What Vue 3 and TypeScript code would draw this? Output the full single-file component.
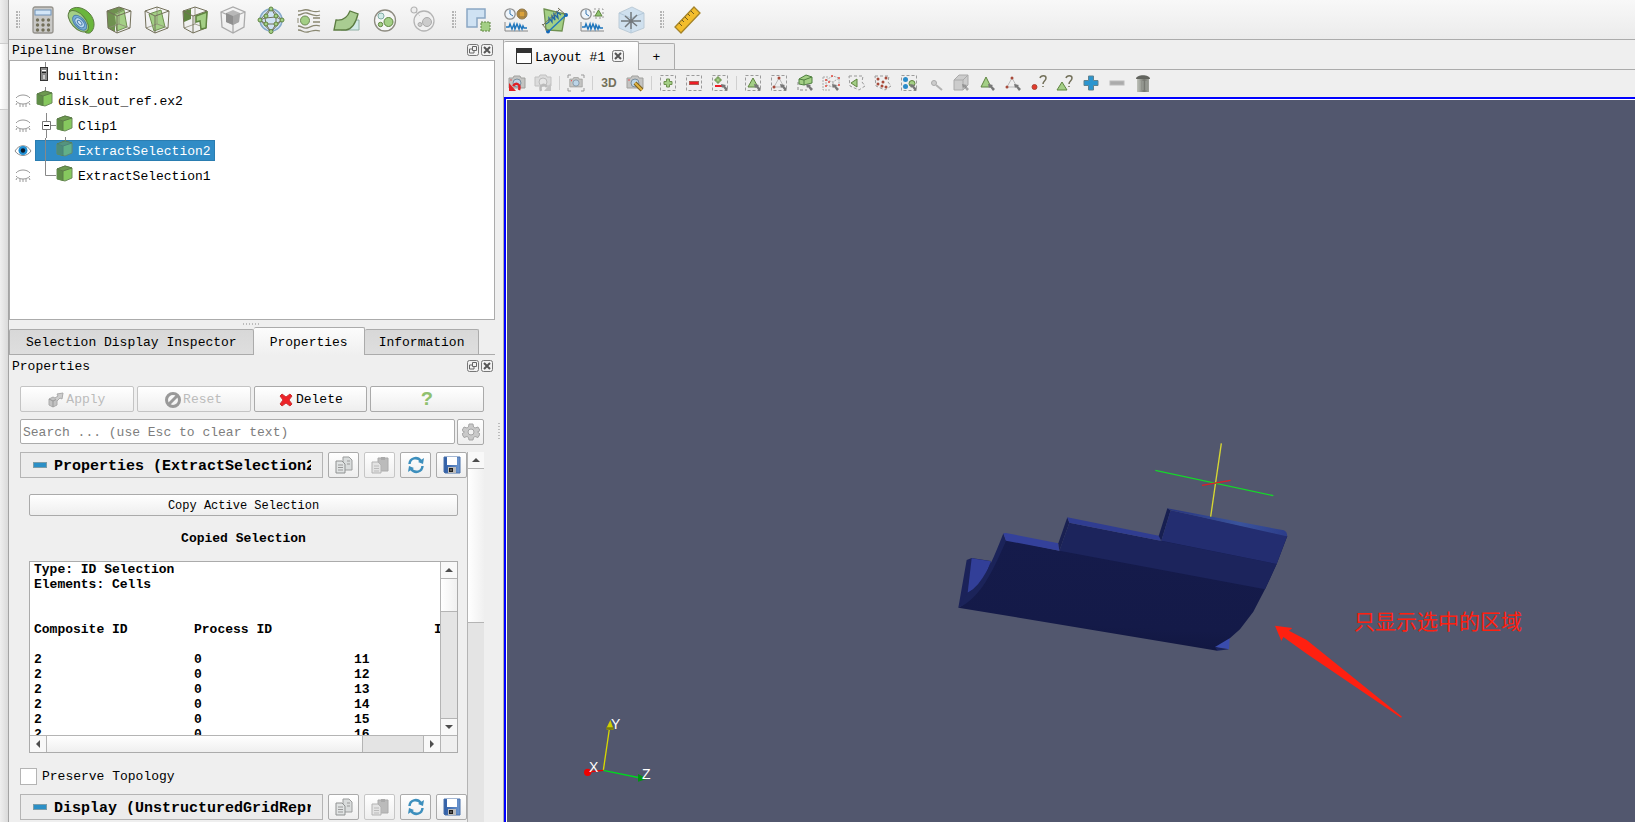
<script setup lang="ts">
import { ref } from 'vue'

interface Tool {
  icon: string
  label: string
}

const filterTools: Tool[] = [
  { icon: 'calculator', label: 'Calculator' },
  { icon: 'contour', label: 'Contour' },
  { icon: 'clip', label: 'Clip' },
  { icon: 'slice', label: 'Slice' },
  { icon: 'threshold', label: 'Threshold' },
  { icon: 'subset', label: 'Extract Subset' },
  { icon: 'glyph', label: 'Glyph' },
  { icon: 'stream', label: 'Stream Tracer' },
  { icon: 'warp', label: 'Warp By Vector' },
  { icon: 'group', label: 'Group Datasets' },
  { icon: 'level', label: 'Extract Level' },
]

const analysisTools: Tool[] = [
  { icon: 'extract', label: 'Extract Selection' },
  { icon: 'global-time', label: 'Plot Global Variables Over Time' },
  { icon: 'plot-line', label: 'Plot Over Line' },
  { icon: 'selection-time', label: 'Plot Selection Over Time' },
  { icon: 'probe', label: 'Probe Location' },
]

const toolGroups: Tool[][] = [filterTools, analysisTools, [{ icon: 'ruler', label: 'Ruler' }]]

const viewGroups: Tool[][] = [
  [
    { icon: 'cam-undo', label: 'Undo Camera' },
    { icon: 'cam-redo', label: 'Redo Camera' },
  ],
  [{ icon: 'cam-shot', label: 'Capture Screenshot' }],
  [
    { icon: '', label: '3D' },
    { icon: 'cam-zoom', label: 'Adjust Camera' },
  ],
  [
    { icon: 'sel-add', label: 'Add Selection' },
    { icon: 'sel-sub', label: 'Subtract Selection' },
    { icon: 'sel-toggle', label: 'Toggle Selection' },
  ],
  [
    { icon: 'pick-cells', label: 'Select Cells On' },
    { icon: 'pick-points', label: 'Select Points On' },
    { icon: 'frustum-cells', label: 'Select Cells Through' },
    { icon: 'frustum-points', label: 'Select Points Through' },
    { icon: 'poly-cells', label: 'Select Cells With Polygon' },
    { icon: 'poly-points', label: 'Select Points With Polygon' },
    { icon: 'pick-blocks', label: 'Select Block' },
    { icon: 'int-point', label: 'Interactive Select Point Data' },
    { icon: 'int-block', label: 'Interactive Select Block' },
    { icon: 'int-cells', label: 'Interactive Select Cells On' },
    { icon: 'int-points', label: 'Interactive Select Points On' },
    { icon: 'hover-points', label: 'Hover Points On' },
    { icon: 'hover-cells', label: 'Hover Cells On' },
    { icon: 'grow', label: 'Grow Selection' },
    { icon: 'shrink', label: 'Shrink Selection' },
    { icon: 'trash', label: 'Clear Selection' },
  ],
]

interface PipelineNode {
  name: string
  icon: 'server' | 'dataset'
  eye: '' | 'eye-closed' | 'eye-open'
  branch: '' | 'branch-box' | 'branch-pass' | 'branch-end'
  tick: boolean
}

const nodes: PipelineNode[] = [
  { name: 'builtin:', icon: 'server', eye: '', branch: '', tick: true },
  { name: 'disk_out_ref.ex2', icon: 'dataset', eye: 'eye-closed', branch: '', tick: true },
  { name: 'Clip1', icon: 'dataset', eye: 'eye-closed', branch: 'branch-box', tick: false },
  { name: 'ExtractSelection2', icon: 'dataset', eye: 'eye-open', branch: 'branch-pass', tick: true },
  { name: 'ExtractSelection1', icon: 'dataset', eye: 'eye-closed', branch: 'branch-end', tick: false },
]

const selected = ref('ExtractSelection2')
const dockTabs = ['Selection Display Inspector', 'Properties', 'Information']
const activeTab = ref('Properties')
const search = ref('')
const preserve = ref(false)
const cellIds = [11, 12, 13, 14, 15, 16]
const sectionTools: Tool[] = [
  { icon: 'copy', label: 'Copy' },
  { icon: 'paste', label: 'Paste' },
  { icon: 'reload', label: 'Restore defaults' },
  { icon: 'save', label: 'Save as defaults' },
]
</script>

<template>
  <svg class="sprite" aria-hidden="true">
    <defs>
      <linearGradient id="g-save" x1="0" x2="1"><stop offset="0" stop-color="#2d5ba4" /><stop offset="1" stop-color="#6d97d0" /></linearGradient>
      <linearGradient id="g-trash" x1="0" x2="1"><stop offset="0" stop-color="#c0c3bb" /><stop offset=".6" stop-color="#74766f" /><stop offset="1" stop-color="#a0a39b" /></linearGradient>
    </defs>

    <symbol id="wire" viewBox="0 0 28 28">
      <path d="M14 1v17M3 22l11-4 11 4" fill="none" stroke="#8d8a76" stroke-width=".8" />
      <path d="M2 5 14 1l12 4-1 17-13 5-9-5ZM2 5l10 5 14-5M12 10v17" fill="none" stroke="#73705a" />
    </symbol>
    <symbol id="calculator" viewBox="0 0 28 28">
      <rect x="4" y="1" width="20" height="26" rx="2" fill="#c8c8c6" stroke="#95938d" stroke-width="1.3" />
      <rect x="6" y="4" width="16" height="5" fill="#d3e6f7" stroke="#6f92b8" />
      <g fill="#73705a"><circle cx="8.500" cy="14" r="1.700" /><circle cx="14" cy="14" r="1.700" /><circle cx="19.500" cy="14" r="1.700" /><circle cx="8.500" cy="19" r="1.700" /><circle cx="14" cy="19" r="1.700" /><circle cx="19.500" cy="19" r="1.700" /><circle cx="8.500" cy="24" r="1.700" /><circle cx="14" cy="24" r="1.700" /><circle cx="19.500" cy="24" r="1.700" /></g>
    </symbol>
    <symbol id="contour" viewBox="0 0 28 28">
      <path d="M2 5C7-1 17 1 23 8c5 6 5 13 2 17-2 3-4 2-6 2Z" fill="#6ab63c" stroke="#5c7c42" />
      <g transform="rotate(48 12 16)" stroke="#5c7c42"><ellipse cx="11" cy="16" rx="13" ry="7" fill="#a3cf85" /><ellipse cx="13" cy="16" rx="9" ry="5" fill="#79aed6" stroke="#4b7fae" /><ellipse cx="13" cy="16" rx="6" ry="3.500" fill="#b9d8ef" stroke="#4b7fae" /><ellipse cx="13" cy="16" rx="3" ry="1.500" fill="#d8e9f7" stroke="#4b7fae" /></g>
    </symbol>
    <symbol id="clip" viewBox="0 0 28 28">
      <path d="M2 5 14 1l6 2-10 5v18l-7-4Z" fill="#6f9150" /><path d="m9 9 10-5 3 17-10 4Z" fill="#a3cf85" stroke="#6f9150" />
      <use href="#wire" />
    </symbol>
    <symbol id="slice" viewBox="0 0 28 28">
      <path d="m6 8 12-4 4 17-11 4Z" fill="#a3cf85" stroke="#6f9150" /><use href="#wire" />
    </symbol>
    <symbol id="threshold" viewBox="0 0 28 28">
      <path d="m2 5 8-2v10l-7 3Z" fill="#5f8440" /><use href="#wire" /><path d="m15 10 11-4-1 16-5 1-1-8-4 1Z" fill="#a3cf85" stroke="#5f8440" stroke-width="1.500" />
    </symbol>
    <symbol id="subset" viewBox="0 0 28 28">
      <path d="M2 6 14 1l12 5-1 15-11 6-11-6ZM2 6l12 5 12-5M14 11v16" fill="none" stroke="#aaa" stroke-width="1.300" />
      <path d="m7 7 7-3 7 3-1 9-6 3-7-3Z" fill="#b8b8b8" /><path d="m7 7 7 3v9l-7-3Z" fill="#8f8f8f" /><path d="m14 10 7-3-1 9-6 3Z" fill="#a5a5a5" />
    </symbol>
    <symbol id="glyph" viewBox="0 0 28 28">
      <circle cx="14" cy="14" r="11" fill="#cfe2f3" stroke="#86a9ca" stroke-width="1.500" />
      <path d="M14 2 3 14l11 12 11-12ZM14 2 8 12l-5 2 6 4 5 8 5-8 6-4-6-3ZM8 12l11-1v7H9Z" fill="none" stroke="#73705a" />
      <g fill="#a3cf85" stroke="#5f8440"><circle cx="14" cy="3" r="2" /><circle cx="3" cy="14" r="2" /><circle cx="25" cy="14" r="2" /><circle cx="14" cy="25.500" r="2" /><circle cx="9" cy="10" r="2" /><circle cx="19" cy="10" r="2" /><circle cx="9" cy="18" r="2" /><circle cx="19" cy="18" r="2" /></g>
    </symbol>
    <symbol id="stream" viewBox="0 0 28 28">
      <path d="M3 5c5 0 5-2 10-1s6 3 12 1M3 9c4 0 5-3 9-2s7 4 13 2M18 12h7M18 16h7M3 20c4 0 5 3 9 2s7-4 13-2M3 24c5 0 5 3 10 2s6-3 12-1" fill="none" stroke="#8a8872" stroke-width="1.300" />
      <circle cx="10" cy="14.500" r="4.500" fill="#a3cf85" stroke="#6f8a55" /><path d="M3 12v5" stroke="#8a8872" />
    </symbol>
    <symbol id="warp" viewBox="0 0 28 28">
      <path d="M14 14h12v10H8Z" fill="#d3ebe8" stroke="#8fb0a4" /><path d="M1 24 3 14c8 1 12-4 14-9l8 3c-2 8-5 15-12 16Z" fill="#a9cc91" stroke="#5c7c42" stroke-width="1.300" />
    </symbol>
    <symbol id="group" viewBox="0 0 28 28">
      <circle cx="14" cy="14.500" r="10.500" fill="#f6f6f6" stroke="#8d8b80" stroke-width="1.300" /><circle cx="10" cy="10" r="3" fill="#d3ebe8" stroke="#82aca5" /><circle cx="17.500" cy="16" r="4.500" fill="#a3cf85" stroke="#5f8440" /><circle cx="9.500" cy="18.500" r="2.200" fill="#a3cf85" stroke="#5f8440" />
    </symbol>
    <symbol id="level" viewBox="0 0 28 28">
      <circle cx="15" cy="15" r="10" fill="#f1f1f1" stroke="#b4b4b4" stroke-width="1.300" /><circle cx="5" cy="4" r="3" fill="#eee" stroke="#b4b4b4" stroke-width="1.200" /><path d="m7 6 4 4" stroke="#b4b4b4" stroke-dasharray="1 1" /><circle cx="18" cy="16" r="4.500" fill="#ccc" stroke="#aaa" /><circle cx="11" cy="18.500" r="2" fill="#ccc" stroke="#aaa" />
    </symbol>
    <symbol id="extract" viewBox="0 0 28 28">
      <path d="M2 3h18v9h-8v9H2Z" fill="#cfe2f3" stroke="#8aa7c4" stroke-width="1.500" /><rect x="16" y="16" width="9" height="9" fill="#a3cf85" stroke="#5f8440" stroke-dasharray="2 1" />
    </symbol>
    <symbol id="clock" viewBox="0 0 28 28">
      <circle cx="7" cy="8" r="5.200" fill="#eef5fb" stroke="#8f8f8f" stroke-width="1.300" /><path d="M7 4v4l3 2" fill="none" stroke="#3674ad" /><path d="M2 16v9h23" fill="none" stroke="#888" /><path d="M3 21h3l1-3 2 5 2-5 1 5 2-5 2 5 1-4 2 4 1-3 1 2h3" fill="none" stroke="#2077bd" stroke-width="1.500" />
    </symbol>
    <symbol id="global-time" viewBox="0 0 28 28">
      <use href="#clock" /><circle cx="19" cy="8" r="5" fill="#d49a32" stroke="#85714a" /><rect x="16" y="5" width="6" height="6" fill="#dba23a" stroke="#85714a" />
    </symbol>
    <symbol id="selection-time" viewBox="0 0 28 28">
      <use href="#clock" /><rect x="15" y="3" width="9" height="9" fill="none" stroke="#999" stroke-dasharray="2 2" /><path d="m19.500 4 3.500 6h-7Z" fill="#8fc56e" stroke="#5f8440" />
    </symbol>
    <symbol id="plot-line" viewBox="0 0 28 28">
      <path d="m3 3 21 5-3 17-16-1Z" fill="#a3cf85" stroke="#6f9150" stroke-width="1.300" /><path d="M7 26 25 9" stroke="#2077bd" stroke-width="1.500" /><path d="m5 18 3-2v-4l3 4v-6l3 4-1-6 4 4-1-6 4 3" fill="none" stroke="#2368a6" stroke-width="1.300" /><circle cx="7" cy="25.500" r="2" fill="#1368b8" /><circle cx="25" cy="9" r="2" fill="#1368b8" /><path d="m17 2 8 7M1 18l6 7M2 19 19 3" fill="none" stroke="#73705a" />
    </symbol>
    <symbol id="probe" viewBox="0 0 28 28">
      <path d="M2 7 15 1l12 6v15l-13 5-12-5Z" fill="#cfe0ee" stroke="#bccbd7" /><path d="m2 7 12 5 13-5M14 12v15" fill="none" stroke="#b3c8d9" /><path d="M4 15h20M14 6v17M8 10l12 10M20 9 8 21" stroke="#73787c" stroke-width="1.500" />
    </symbol>
    <symbol id="ruler" viewBox="0 0 28 28">
      <path d="M21 1 27 7 8 27 2 21Z" fill="#f3bd2b" stroke="#a48328" stroke-width="1.300" /><path d="m6 17 3 3m0-6 2 2m1-5 3 3m0-6 2 2m1-5 3 3" stroke="#705c20" />
    </symbol>

    <symbol id="camera" viewBox="0 0 18 18">
      <path d="M1 4h4l1-2h6l1 2h4v10H1Z" fill="#c4c4c2" stroke="#a0a09d" /><circle cx="9" cy="9" r="4" fill="#bcd5e8" stroke="#7b8e9d" /><path d="M2.500 6h1" stroke="#e33" stroke-width="1.500" />
    </symbol>
    <symbol id="pointer" viewBox="0 0 18 18">
      <path d="m10 10 1 4 1-1 3 4 2-2-3-3 1-1Z" fill="#777" />
    </symbol>
    <symbol id="dash" viewBox="0 0 18 18"><rect x="1.500" y="1.500" width="15" height="15" fill="none" stroke="#9b9b9b" stroke-dasharray="3 2" /></symbol>
    <symbol id="cam-undo" viewBox="0 0 18 18"><use href="#camera" /><path d="M5 12c3-4 8-2 6 4" fill="none" stroke="#df2226" stroke-width="2.500" /><path d="M1 9v8h7Z" fill="#df2226" /></symbol>
    <symbol id="cam-redo" viewBox="0 0 18 18"><path d="M1 3h4l1-2h6l1 2h4v9H1Z" fill="#dbdbdb" stroke="#c1c1c1" /><circle cx="9" cy="8" r="4" fill="#e6e6e6" stroke="#bbb" /><path d="M13 13c-3-4-8-2-6 4" fill="none" stroke="#bbb" stroke-width="2.500" /><path d="M17 9v8h-7Z" fill="#c4c4c4" /></symbol>
    <symbol id="cam-shot" viewBox="0 0 18 18"><use href="#camera" x="2" y="2" width="14" height="14" /><path d="M1 4V1h3M14 1h3v3M17 14v3h-3M4 17H1v-3" fill="none" stroke="#999" /></symbol>
    <symbol id="cam-zoom" viewBox="0 0 18 18"><use href="#camera" /><path d="m9 9 7 7" stroke="#7d5e1c" stroke-width="4" /><path d="m9 9 7 7" stroke="#e1b643" stroke-width="2" /></symbol>
    <symbol id="plus-s" viewBox="0 0 18 18"><path d="M7.500 5h3v2.500H13v3h-2.500V13h-3v-2.500H5v-3h2.500Z" fill="#a3cf85" stroke="#6f9150" /></symbol>
    <symbol id="sel-add" viewBox="0 0 18 18"><use href="#dash" /><use href="#plus-s" /></symbol>
    <symbol id="sel-sub" viewBox="0 0 18 18"><use href="#dash" /><rect x="4.500" y="7.500" width="9" height="3" fill="#ee1c25" stroke="#ad5a50" /></symbol>
    <symbol id="sel-toggle" viewBox="0 0 18 18"><use href="#dash" /><path d="M6 3h2v2h2v2H8v2H6V7H4V5h2Z" fill="#a3cf85" stroke="#6f9150" /><path d="M4 12h7" stroke="#ee1c25" stroke-width="2" /><use href="#pointer" /></symbol>
    <symbol id="pick-cells" viewBox="0 0 18 18"><use href="#dash" /><path d="m9 4 5 9H4Z" fill="#a3cf85" stroke="#5f8440" /><use href="#pointer" /></symbol>
    <symbol id="pick-points" viewBox="0 0 18 18"><use href="#dash" /><path d="m9 4 5 9H4Z" fill="none" stroke="#bbb" /><g fill="#a84a3a"><circle cx="9" cy="4" r="1.500" /><circle cx="4" cy="13" r="1.500" /></g><use href="#pointer" /></symbol>
    <symbol id="frustum-cells" viewBox="0 0 18 18"><path d="M2 8v8h9" fill="none" stroke="#8b8b8b" stroke-dasharray="3 2" /><path d="m3 5 7-4 6 2v6l-8 2-5-1Z" fill="#a3cf85" stroke="#4f8040" /><path d="m3 5 5 1 8-3M8 6v5" fill="none" stroke="#4f8040" /><use href="#pointer" /></symbol>
    <symbol id="frustum-points" viewBox="0 0 18 18"><path d="M1 3h6M1 3v13h8M4 6l7-4 6 2v7l-6 2-7-2Zm0 0 7 2 6-4m-6 4v5" fill="none" stroke="#aaa" stroke-dasharray="2 1" /><g fill="#e34a3e"><circle cx="4" cy="6" r="1" /><circle cx="10" cy="2" r="1" /><circle cx="17" cy="4" r="1" /><circle cx="4" cy="12" r="1" /><circle cx="7" cy="8" r="1" /><circle cx="17" cy="11" r="1" /></g><use href="#pointer" /></symbol>
    <symbol id="poly-cells" viewBox="0 0 18 18"><path d="M1 2h14l-1 6 3 4-6 4-9-4Z" fill="none" stroke="#999" stroke-dasharray="3 2" /><path d="m3 9 6-4v8Z" fill="#a3cf85" stroke="#5f8440" /></symbol>
    <symbol id="poly-points" viewBox="0 0 18 18"><path d="M1 2h14l-1 6 3 4-6 4-9-4Z" fill="none" stroke="#999" stroke-dasharray="3 2" /><g fill="#a84a3a"><circle cx="4" cy="5" r="1.500" /><circle cx="9" cy="8" r="1.500" /><circle cx="12" cy="4" r="1.500" /><circle cx="4" cy="10" r="1.500" /><circle cx="8" cy="12" r="1.500" /><circle cx="12" cy="13" r="1.500" /></g></symbol>
    <symbol id="pick-blocks" viewBox="0 0 18 18"><use href="#dash" /><circle cx="5.500" cy="5.500" r="2.500" fill="#2b8cc9" /><circle cx="5.500" cy="12.500" r="2.500" fill="#2b8cc9" /><circle cx="12" cy="9.500" r="3" fill="#a3cf85" stroke="#5f8440" /><use href="#pointer" /></symbol>
    <symbol id="int-point" viewBox="0 0 18 18"><circle cx="8" cy="9" r="2.500" fill="#ccc" stroke="#aaa" /><path d="m10 11 6 5" stroke="#b3b3b3" stroke-width="2" /></symbol>
    <symbol id="int-block" viewBox="0 0 18 18"><path d="m2 6 5-5h9v10l-5 5H2Z" fill="#ccc" stroke="#aaa" /><path d="M2 6h9v10M11 6l5-5" fill="none" stroke="#aaa" /><use href="#pointer" opacity=".6" /></symbol>
    <symbol id="int-cells" viewBox="0 0 18 18"><path d="m8 3 5 10H3Z" fill="#a3cf85" stroke="#5f8440" /><use href="#pointer" /></symbol>
    <symbol id="int-points" viewBox="0 0 18 18"><path d="m8 4 5 9H3Z" fill="none" stroke="#bbb" /><g fill="#a84a3a"><circle cx="8" cy="4" r="1.500" /><circle cx="3" cy="13" r="1.500" /></g><use href="#pointer" /></symbol>
    <symbol id="hook" viewBox="0 0 18 18"><path d="M10 4c1-3 6-3 6 0 0 3-3 3-3 6m0 2v1" fill="none" stroke="#73705a" stroke-width="1.500" /></symbol>
    <symbol id="hover-points" viewBox="0 0 18 18"><circle cx="4.500" cy="13" r="2.500" fill="#e5392c" stroke="#a84a3a" /><use href="#hook" /></symbol>
    <symbol id="hover-cells" viewBox="0 0 18 18"><path d="m6 8 5 8H1Z" fill="#a3cf85" stroke="#5f8440" /><use href="#hook" /></symbol>
    <symbol id="grow" viewBox="0 0 18 18"><path d="M6.500 2h5v4.500H16v5h-4.500V16h-5v-4.500H2v-5h4.500Z" fill="#2b95cf" stroke="#5e8290" /></symbol>
    <symbol id="shrink" viewBox="0 0 18 18"><rect x="2" y="7" width="14" height="4" fill="#ababab" stroke="#bbb" /></symbol>
    <symbol id="trash" viewBox="0 0 18 18"><path d="M3 5h12v13H3Z" fill="url(#g-trash)" /><path d="M2 5c0-5 14-5 14 0Z" fill="#62645e" /><path d="M6 7v9m3-9v9m3-9v9" stroke="#aeb1a9" stroke-width=".7" /></symbol>

    <symbol id="server" viewBox="0 0 20 25"><rect x="4.500" y="4.500" width="7" height="13" fill="#8a8a8a" stroke="#333" /><path d="M6 7.500h4" stroke="#fff" /><path d="M6 9.500h4" stroke="#222" /><path d="M8 12v4" stroke="#ccc" stroke-width="2" /></symbol>
    <symbol id="dataset" viewBox="0 0 20 25">
      <path d="m1 6 8-3 7 2v10l-7 3-8-2Z" fill="#86c85e" stroke="#6d8a5c" /><path d="m1 6 6 2v10l-6-2Z" fill="#5f8d47" /><path d="m1 6 8-3 7 2-9 3Z" fill="#6d9a50" stroke="#5d7d49" /><path d="M7 8v10" stroke="#5d7d49" />
    </symbol>
    <symbol id="branch-box" viewBox="0 0 20 25"><path d="M10.500-2v11M10.500 17v8M15 12.500h5" stroke="#888" /><path d="M6.500 8.500h8v8h-8Z" fill="#fff" stroke="#777" /><path d="M8 12.500h5" stroke="#000" /></symbol>
    <symbol id="branch-pass" viewBox="0 0 20 25"><path d="M9.500 0v25" stroke="#888" /></symbol>
    <symbol id="branch-end" viewBox="0 0 20 25"><path d="M9.500 0v12.500H20" fill="none" stroke="#888" /></symbol>
    <symbol id="eye-closed" viewBox="0 0 18 16"><path d="M2 5c3-4 11-4 14 0M2 8c3 4 11 4 14 0M3 10l-1 2M6 11v3M9 11v3M12 11v3M15 10l1 2" fill="none" stroke="#999" /></symbol>
    <symbol id="eye-open" viewBox="0 0 18 16"><path d="M1 8c4-7 12-7 16 0-4 6-12 6-16 0Z" fill="#fff" stroke="#8b8b8b" /><circle cx="9" cy="7.500" r="4.500" fill="#1f8fd4" /><circle cx="9" cy="7.500" r="2.200" fill="#0a1a2a" /></symbol>
    <symbol id="float" viewBox="0 0 12 12"><rect x=".5" y=".5" width="11" height="11" rx="2" fill="#f2f2f2" stroke="#777" /><path d="M5.500 2.500h4v4h-4ZM5 5H2.500v4H7V7" fill="none" stroke="#666" /></symbol>
    <symbol id="close" viewBox="0 0 12 12"><rect x=".5" y=".5" width="11" height="11" rx="2" fill="#f2f2f2" stroke="#777" /><path d="m3 3 6 6m0-6L3 9" stroke="#555" stroke-width="2" /></symbol>

    <symbol id="apply" viewBox="0 0 16 16"><path d="m1 7 4-2 4 2v6l-4 2-4-2Z" fill="#c2c2c2" stroke="#aaa" /><path d="m1 7 4 2 4-2M5 9v6" fill="none" stroke="#999" /><path d="m7 6 3-2-1-2 6-1-1 6-2-1-3 3" fill="#ccc" stroke="#aaa" /></symbol>
    <symbol id="reset" viewBox="0 0 16 16"><circle cx="8" cy="8" r="6.500" fill="none" stroke="#999" stroke-width="3" /><path d="m12 4-8 8" stroke="#999" stroke-width="3" /></symbol>
    <symbol id="delete" viewBox="0 0 16 16"><path d="m4 2 4 3 4-3 2 2-3 4 3 4-2 2-4-3-4 3-2-2 3-4-3-4Z" fill="#ee2228" stroke="#c33" /></symbol>
    <symbol id="gear" viewBox="0 0 18 18"><path d="M7 1h4l.5 3 1.500 1 3-1 2 3.500L15.500 9l2.500 2-2 3.500-3-1-1.500 1L11 17H7l-.5-2.500-1.500-1-3 1L0 11l2.500-2L0 7.500 2 4l3 1 1.500-1Z" fill="#c9c9c9" stroke="#a5a5a5" /><circle cx="9" cy="9" r="3" fill="#f2f2f2" stroke="#a5a5a5" /></symbol>
    <symbol id="copy" viewBox="0 0 18 18"><path d="M8 1h6l3 3v10H8Z" fill="#d9dcdc" stroke="#9b9d9d" /><path d="M1 5h6l3 3v9H1Z" fill="#e0e3e3" stroke="#8f9191" /><path d="M3 9h5M3 11.500h5M3 14h5M12 5h3M12 8h3" stroke="#999" /></symbol>
    <symbol id="paste" viewBox="0 0 18 18"><path d="M7 2h10v13H7Z" fill="#bbb" stroke="#aaa" /><path d="M10 1h4v3h-4Z" fill="#aaa" /><path d="M1 6h6l3 3v8H1Z" fill="#e3e3e3" stroke="#b3b3b3" /><path d="M3 10h5M3 12.500h5M3 15h5" stroke="#bbb" /></symbol>
    <symbol id="reload" viewBox="0 0 18 18"><path d="M2.500 8C3 2 10 0 14 5M15.500 10C15 16 8 18 4 13" fill="none" stroke="#3d8fbd" stroke-width="2.500" /><path d="m17 2-1 6-5-2ZM1 16l1-6 5 2Z" fill="#3d8fbd" /></symbol>
    <symbol id="save" viewBox="0 0 18 18"><path d="M1 1h16v16H2l-1-1Z" fill="url(#g-save)" stroke="#4870aa" /><path d="M4 1h10v8H4Z" fill="#fff" /><path d="M5 11h8v6H5Z" fill="#bbb" /><path d="M6 12h4v4H6Z" fill="#1d1d1d" /><path d="M7.500 14h1" stroke="#fff" /></symbol>
    <symbol id="arrow" viewBox="0 0 16 16"><path d="m4 10 4-4 4 4Z" fill="#4d4d4d" /></symbol>
  </svg>

  <div class="app">
    <div class="edge"><div class="edge-top"></div><div class="edge-mid"></div></div>
    <div class="main">
      <header class="toolbar" role="toolbar">
        <div v-for="(group, g) in toolGroups" :key="g" class="group">
          <span class="grip"></span>
          <button v-for="t in group" :key="t.icon" class="tool" :aria-label="t.label">
            <svg width="28" height="28"><use :href="'#' + t.icon" /></svg>
          </button>
        </div>
      </header>

      <div class="body">
        <aside class="dock">
          <div class="dock-title">
            <span>Pipeline Browser</span>
            <button class="mini" aria-label="Float"><svg width="12" height="12"><use href="#float" /></svg></button>
            <button class="mini" aria-label="Close"><svg width="12" height="12"><use href="#close" /></svg></button>
          </div>
          <ul class="tree">
            <li v-for="n in nodes" :key="n.name" class="node">
              <button class="eye" :aria-label="'Visibility of ' + n.name">
                <svg v-if="n.eye" width="18" height="16"><use :href="'#' + n.eye" /></svg>
              </button>
              <button class="label" :class="{ selected: n.name === selected }" @click="selected = n.name">
                <svg v-if="n.branch" class="cell" width="20" height="25"><use :href="'#' + n.branch" /></svg>
                <svg class="cell" width="20" height="25">
                  <path v-if="n.tick" d="M9.500 -1v5" stroke="#888" />
                  <use :href="'#' + n.icon" />
                  <path v-if="n.name === selected" d="m1 6 8-3 7 2v10l-7 3-8-2Z" fill="#308cc6" opacity=".4" />
                </svg>
                <span>{{ n.name }}</span>
              </button>
            </li>
          </ul>
          <div class="splitter-h"><span></span></div>
          <nav class="tabs">
            <button v-for="t in dockTabs" :key="t" class="tab" :class="{ active: t === activeTab }" @click="activeTab = t">{{ t }}</button>
          </nav>
          <div class="dock-title props-title">
            <span>Properties</span>
            <button class="mini" aria-label="Float"><svg width="12" height="12"><use href="#float" /></svg></button>
            <button class="mini" aria-label="Close"><svg width="12" height="12"><use href="#close" /></svg></button>
          </div>
          <div class="props">
            <div class="actions">
              <button class="btn" disabled><svg width="16" height="16"><use href="#apply" /></svg>Apply</button>
              <button class="btn" disabled><svg width="16" height="16"><use href="#reset" /></svg>Reset</button>
              <button class="btn"><svg width="16" height="16"><use href="#delete" /></svg>Delete</button>
              <button class="btn help">?</button>
            </div>
            <div class="search">
              <input v-model="search" type="text" aria-label="Search properties" placeholder="Search ... (use Esc to clear text)" />
              <button class="btn gear" aria-label="Advanced properties"><svg width="18" height="18"><use href="#gear" /></svg></button>
            </div>
            <div class="scroll">
              <div class="content">
                <div class="section">
                  <button class="fold"><i></i><span>Properties (ExtractSelection2)</span></button>
                  <button v-for="t in sectionTools" :key="t.icon" class="btn sq" :class="{ dim: t.icon === 'paste' }" :aria-label="t.label"><svg width="18" height="18"><use :href="'#' + t.icon" /></svg></button>
                </div>
                <div class="selection">
                  <button class="btn copy">Copy Active Selection</button>
                  <h3>Copied Selection</h3>
                  <div class="textbox">
                    <div class="view">
                      <p>Type: ID Selection</p>
                      <p>Elements: Cells</p>
                      <table>
                        <thead>
                          <tr><th>Composite ID</th><th>Process ID</th><th class="index">Index</th></tr>
                        </thead>
                        <tbody>
                          <tr v-for="id in cellIds" :key="id"><td>2</td><td>0</td><td>{{ id }}</td></tr>
                        </tbody>
                      </table>
                    </div>
                    <div class="vbar">
                      <button aria-label="Scroll up"><svg width="16" height="16"><use href="#arrow" /></svg></button>
                      <div class="thumb"></div>
                      <button class="down" aria-label="Scroll down"><svg width="16" height="16"><use href="#arrow" /></svg></button>
                    </div>
                    <div class="hbar">
                      <button class="left" aria-label="Scroll left"><svg width="16" height="16"><use href="#arrow" /></svg></button>
                      <div class="thumb"></div>
                      <div class="track"></div>
                      <button class="right" aria-label="Scroll right"><svg width="16" height="16"><use href="#arrow" /></svg></button>
                    </div>
                    <div class="corner"></div>
                  </div>
                </div>
                <label class="check"><input v-model="preserve" type="checkbox" />Preserve Topology</label>
                <div class="section">
                  <button class="fold"><i></i><span>Display (UnstructuredGridRepresentation)</span></button>
                  <button v-for="t in sectionTools" :key="t.icon" class="btn sq" :class="{ dim: t.icon === 'paste' }" :aria-label="t.label"><svg width="18" height="18"><use :href="'#' + t.icon" /></svg></button>
                </div>
              </div>
              <div class="vbar outer">
                <button aria-label="Scroll up"><svg width="16" height="16"><use href="#arrow" /></svg></button>
                <div class="thumb"></div>
              </div>
            </div>
          </div>
        </aside>

        <div class="splitter-v"><span></span></div>

        <main class="workspace">
          <nav class="layout-tabs">
            <div class="layout-tab">
              <svg width="16" height="16" viewBox="0 0 16 16"><path d="M.5.5h15v15H.5Z" fill="#fff" stroke="#333" /><path d="M0 0h16v5H0Z" fill="#333" /></svg>
              <button class="layout-name">Layout #1</button>
              <button class="mini" aria-label="Close layout"><svg width="12" height="12"><use href="#close" /></svg></button>
            </div>
            <button class="add-tab" aria-label="New layout">+</button>
          </nav>
          <div class="view-tools" role="toolbar">
            <template v-for="(group, g) in viewGroups" :key="g">
              <i v-if="g > 0" class="sep"></i>
              <button v-for="t in group" :key="t.label" class="vtool" :aria-label="t.label">
                <svg v-if="t.icon" width="18" height="18"><use :href="'#' + t.icon" /></svg>
                <b v-else>{{ t.label }}</b>
              </button>
            </template>
          </div>
          <div class="viewport">
            <svg class="scene" viewBox="507 100 1128 722" preserveAspectRatio="xMinYMin meet">
              <defs>
                <linearGradient id="g-hull" x1="0" y1="0" x2="-.15" y2="1"><stop offset="0" stop-color="#151b4b" /><stop offset=".7" stop-color="#141a48" /><stop offset="1" stop-color="#10153c" /></linearGradient>
                <linearGradient id="g-rim" x1="0" x2="1"><stop offset="0" stop-color="#27347e" /><stop offset=".6" stop-color="#3a539c" /><stop offset="1" stop-color="#2c3d8a" /></linearGradient>
              </defs>
              <svg x="930" y="430" width="380" height="240" viewBox="0 0 1140 720">
                <path d="M85 533 110 390l15-6 57 9 2 30-60 66Z" fill="#1b2259" />
                <path d="m125 385 58 9-20 50q-22 34-50 44Z" fill="#323f98" />
                <path d="M85 533c60-30 115-140 143-205l160 34 304-30 380-14-32 84-35 76-35 67-40 53-33 29-35 24v11Z" fill="url(#g-hull)" />
                <path d="M85 533 113 488c44-20 77-100 107-178l8 22c-40 95-80 175-143 201Z" fill="#1b2359" />
                <path d="m220 310 8-1 157 31 3 22-160-30Z" fill="#34419b" />
                <path d="m385 340 27-78 6 16-30 84Z" fill="#192052" />
                <path d="m418 278 274 54 348 70-35 76-617-116Z" fill="#1c245c" />
                <path d="m412 262 278 56 2 14-274-54Z" fill="#303d91" />
                <path d="m686 318 26-83 10 6-28 91Z" fill="#171f51" />
                <path d="m722 241 350 76-32 85-346-70Z" fill="#232d70" />
                <path d="m712 235 350 66q12 6 8 18l-348-78Z" fill="url(#g-rim)" />
                <path d="m855 651 44-26-2 33Z" fill="#3a4cad" /><path d="m855 651 42 7-35 4Z" fill="#1b235c" />
                <g fill="none" stroke-width="4"><path d="m874 40-32 220" stroke="#d8d832" /><path d="m676 121 354 76" stroke="#16d62a" /><path d="m816 166 86-15" stroke="#e01f24" /></g>
              </svg>
              <svg x="560" y="700" width="120" height="100" viewBox="0 0 360 300">
                <g stroke-width="4"><path d="m130 211 19-130" stroke="#d8d800" /><path d="m130 211 112 23" stroke="#00d820" /><path d="m130 211-48 5" stroke="#e00" /></g>
                <path d="m151 60 10 28q-12 5-23-1Z" fill="#cfcf00" /><path d="M138 87q11 6 23 1v-6h-22Z" fill="#777b12" /><path d="m234 222 28 14-28 9Z" fill="#009412" /><circle cx="83" cy="217" r="11" fill="#f00000" />
              </svg>
              <g class="axis"><text x="589" y="772">X</text><text x="611" y="729">Y</text><text x="642" y="779">Z</text></g>
              <svg x="1240" y="590" width="320" height="140" viewBox="0 0 960 420"><path d="m105 107 52 7-10 8 53 28 286 230-3 3-283-192-70-50-6 12Z" fill="#ff2010" /></svg>
              <text class="note" x="1354" y="629">只显示选中的区域</text>
            </svg>
          </div>
        </main>
      </div>
    </div>
  </div>
</template>

<style>
body { margin: 0; }
</style>

<style scoped>
* { box-sizing: border-box; }
button { font: inherit; color: inherit; margin: 0; padding: 0; border: 0; background: none; }
svg { display: block; flex: none; }
.sprite { position: absolute; width: 0; height: 0; }
.app { display: grid; grid-template-columns: 9px minmax(0, 1fr); height: 100vh; overflow: hidden; background: #efefef; color: #000; font: 13px/16px "Liberation Mono", "Noto Sans CJK SC", monospace; }
.edge { background: linear-gradient(90deg, #efefef, #dadada); border-right: 1px solid #a4a4a4; }
.edge-top { height: 44px; border-bottom: 1px solid #ccc; }
.edge-mid { height: 66px; background: linear-gradient(90deg, #fff, #e6e6e6); border-bottom: 1px solid #ccc; }
.main { display: flex; flex-direction: column; min-width: 0; min-height: 0; }
.toolbar { display: flex; flex: none; height: 40px; border-bottom: 1px solid #ababab; background: linear-gradient(#f8f8f8, #ebebeb); }
.group { display: flex; align-items: center; }
.grip { width: 18px; height: 17px; padding: 0 4px 0 10px; background: radial-gradient(circle at 1px 1px, #b5b5b5 1px, transparent 1px) 10px 0 / 3px 3px repeat; background-clip: content-box; }
.group:first-child .grip { width: 15px; padding-left: 7px; }
.tool { display: grid; place-items: center; width: 38px; height: 38px; }
.body { display: grid; flex: 1; min-height: 0; grid-template-columns: minmax(0, 486fr) 8px minmax(0, 1132fr); }
.dock { display: flex; flex-direction: column; min-width: 0; min-height: 0; }
.dock-title { display: flex; flex: none; align-items: center; gap: 2px; height: 20px; padding: 0 2px 0 3px; }
.dock-title span { flex: 1; padding-top: 2px; }
.tree { flex: none; height: 260px; margin: 0; padding: 2px 0 0; list-style: none; background: #fff; border: 1px solid #ababab; }
.node { display: flex; align-items: center; height: 25px; }
.eye { display: grid; place-items: center; width: 25px; height: 25px; }
.label { display: flex; align-items: center; height: 21px; padding: 0 4px 0 1px; white-space: pre; }
.label span { padding: 2px 0 0 2px; }
.cell { margin: -2px 0; overflow: visible; }
.selected { background: #308cc6; color: #fff; box-shadow: inset 0 0 0 1px #2a7db1; }
.splitter-h { display: grid; flex: none; place-items: center; height: 7px; }
.splitter-h span { width: 18px; height: 2px; background: repeating-linear-gradient(90deg, #bbb 0 1px, transparent 1px 3px); }
.tabs { display: flex; flex: none; align-items: flex-end; height: 28px; border-bottom: 1px solid #ababab; }
.tab { height: 25px; padding: 2px 16px 0; background: linear-gradient(#d8d8d8, #dedede); border: 1px solid #ababab; border-bottom: 0; border-radius: 2px 2px 0 0; white-space: nowrap; }
.tab + .tab { border-left: 0; }
.tab:last-child { padding: 2px 14px 0; }
.tab.active { height: 28px; margin-bottom: -1px; background: linear-gradient(#fcfcfc, #efefef); }
.props-title { height: 22px; }
.props { display: flex; flex: 1; flex-direction: column; min-height: 0; padding: 9px 11px 0; }
.actions { display: grid; flex: none; grid-template-columns: repeat(4, 1fr); gap: 3px; }
.btn { display: flex; align-items: center; justify-content: center; gap: 2px; height: 26px; border: 1px solid #aaa; border-radius: 2px; background: linear-gradient(#fff, #eee); }
.actions .btn { padding-top: 2px; }
.btn:disabled { color: #bbb; border-color: #c4c4c4; }
.help { color: #8fc06e; font-size: 20px; font-weight: 700; }
.search { display: flex; flex: none; gap: 2px; margin: 7px 0; }
.search input { flex: 1; min-width: 0; height: 25px; padding: 2px 2px 0; border: 1px solid #ababab; border-radius: 2px; background: #fff; font: inherit; }
.search input::placeholder { color: #7d7d7d; opacity: 1; }
.gear { width: 27px; }
.scroll { display: flex; flex: 1; min-height: 0; overflow: hidden; }
.content { flex: 1; min-width: 0; }
.section { display: flex; gap: 5px; }
.fold { display: flex; flex: 1; align-items: center; gap: 7px; min-width: 0; height: 26px; padding: 0 11px 0 12px; border: 1px solid #b4b4b4; background: #ececec; font-size: 15px; font-weight: 700; line-height: 20px; text-align: left; }
.fold i { flex: none; width: 14px; height: 6px; background: #2b8fc6; border: 1px solid #7c9ca8; }
.fold span { overflow: hidden; padding-top: 3px; white-space: nowrap; }
.sq { flex: none; width: 31px; }
.dim { border-color: #c6c6c6; }
.selection { padding: 16px 9px 15px 9px; }
.copy { width: 100%; height: 22px; padding-top: 2px; font-size: 12px; }
h3 { margin: 15px 0 14px; font-size: 13px; line-height: 16px; text-align: center; }
.textbox { display: grid; grid-template: minmax(0, 173px) 17px / minmax(0, 1fr) 17px; border: 1px solid #ababab; background: #fff; font-weight: 700; line-height: 15px; }
.view { overflow: hidden; padding-left: 4px; }
.view p { margin: 0; }
table { width: 480px; table-layout: fixed; border-spacing: 0; margin-top: 30px; }
th { padding: 0 0 15px; text-align: left; }
td { padding: 0; }
.index { padding-left: 80px; }
.vbar { display: flex; flex-direction: column; border-left: 1px solid #b4b4b4; background: #e4e4e4; }
.vbar button { height: 17px; background: #f8f8f8; border-bottom: 1px solid #b4b4b4; }
.vbar .thumb { height: 33px; border-bottom: 1px solid #b4b4b4; background: linear-gradient(90deg, #fff, #f0f0f0); }
.vbar .down { margin-top: auto; border-top: 1px solid #b4b4b4; border-bottom: 0; }
.down svg { transform: rotate(180deg); }
.outer { width: 17px; }
.outer .thumb { height: 154px; }
.hbar { display: flex; border-top: 1px solid #b4b4b4; background: #e4e4e4; }
.hbar button { width: 17px; background: #f8f8f8; }
.hbar .left { border-right: 1px solid #b4b4b4; }
.hbar .right { border-left: 1px solid #b4b4b4; }
.left svg { transform: rotate(-90deg); }
.right svg { transform: rotate(90deg); }
.hbar .thumb { flex: 21; border-right: 1px solid #b4b4b4; background: linear-gradient(#fff, #efefef); }
.hbar .track { flex: 4; }
.corner { border: solid #b4b4b4; border-width: 1px 0 0 1px; background: #efefef; }
.check { display: flex; align-items: center; gap: 5px; height: 17px; margin-bottom: 9px; }
.check input { appearance: none; width: 17px; height: 17px; margin: 0; border: 1px solid #b4b4b4; background: #fff; }
.check input:checked { background: #308cc6; }
.splitter-v { display: grid; place-items: center; }
.splitter-v span { width: 2px; height: 17px; background: repeating-linear-gradient(#bbb 0 1px, transparent 1px 3px); }
.workspace { display: flex; flex-direction: column; min-width: 0; min-height: 0; border-left: 1px solid #ababab; }
.layout-tabs { display: flex; flex: none; align-items: flex-end; height: 30px; border-bottom: 1px solid #ababab; }
.layout-tab { display: flex; align-items: center; gap: 3px; height: 29px; margin-bottom: -1px; padding: 0 14px 0 12px; border: 1px solid #ababab; border-width: 1px 1px 0 0; border-radius: 2px 2px 0 0; background: linear-gradient(#fff, #efefef); }
.layout-name { width: 74px; padding-top: 3px; text-align: left; white-space: nowrap; }
.add-tab { width: 36px; height: 26px; padding-top: 2px; border: 1px solid #ababab; border-width: 1px 1px 0 0; border-radius: 0 2px 0 0; background: #ebebeb; }
.view-tools { display: flex; flex: none; align-items: center; height: 27px; padding-bottom: 2px; overflow: hidden; }
.vtool { display: grid; flex: none; place-items: center; width: 26px; height: 25px; }
.vtool b { color: #73705a; font: 700 12px/16px "Liberation Sans", sans-serif; }
.sep { flex: none; width: 7px; height: 14px; border: solid transparent; border-width: 0 3px; background: #d0d0d0; background-clip: padding-box; }
.viewport { flex: 1; min-height: 0; border: solid #0000ff; border-width: 2px 0 0 2px; box-shadow: inset 1px 1px #fff; padding: 1px 0 0 1px; background: #52576e; }
.scene { width: 100%; height: 100%; }
.axis { fill: #fff; font: 14px "Liberation Sans", sans-serif; }
.note { fill: #ff2010; font: 400 21px "Noto Sans CJK SC", sans-serif; }
</style>
